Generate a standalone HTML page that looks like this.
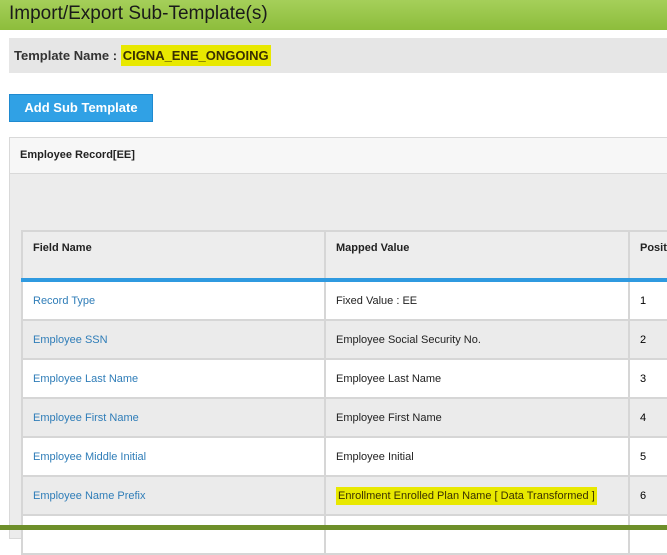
<!DOCTYPE html>
<html><head><style>
body{margin:0;width:667px;height:530px;overflow:hidden;background:#fff;font-family:"Liberation Sans",sans-serif;position:relative}
.hd{position:absolute;left:0;top:0;width:667px;height:30px;background:linear-gradient(#a5cf5a,#8dbd3c);}
.hd span{position:absolute;left:9px;top:3px;font-size:19px;color:#1a1a1a}
.tn{position:absolute;left:9px;top:38px;width:658px;height:35px;background:#e6e6e6}
.tn .t{position:absolute;left:5px;top:10px;font-size:13px;font-weight:bold;color:#333;white-space:nowrap}
.hl{background:#e8e800;padding:3px 2px;color:#3a3000}
.btn{position:absolute;left:9px;top:94px;width:142px;height:26px;background:#30a1e5;border:1px solid #1f8ad0;color:#fff;font-weight:bold;font-size:13px;text-align:center;line-height:26px}
.pn{position:absolute;left:9px;top:137px;width:660px;height:400px;border:1px solid #d9d9d9;background:#ececec}
.ph{height:35px;background:#f7f7f7;border-bottom:1px solid #d9d9d9;font-size:11px;font-weight:bold;color:#222;line-height:35px;padding-left:10px}
table{position:absolute;left:11px;top:92px;border-collapse:collapse;font-size:11px;table-layout:fixed;width:700px}
td,th{border:2px solid #d6d6d6;padding:0 0 0 10px;text-align:left;height:37px;white-space:nowrap;overflow:hidden}
th{height:49px;background:#ededed;color:#222;border-bottom:4px solid #2f9ae0;vertical-align:top;padding-top:10px;box-sizing:border-box}
td.a{color:#2f7db8}
td.b{color:#222}
tr.g td{background:#ebebeb}
tr.w td{background:#fff}
.ft{position:absolute;left:0;top:525px;width:667px;height:5px;background:#6e8f2a}
</style></head><body>
<div class="hd"><span>Import/Export Sub-Template(s)</span></div>
<div class="tn"><span class="t">Template Name : <span class="hl">CIGNA_ENE_ONGOING</span></span></div>
<div class="btn">Add Sub Template</div>
<div class="pn"><div class="ph">Employee Record[EE]</div>
<table>
<colgroup><col style="width:303px"><col style="width:304px"><col style="width:93px"></colgroup>
<tr><th>Field Name</th><th>Mapped Value</th><th>Positi</th></tr>
<tr class="w"><td class="a">Record Type</td><td class="b">Fixed Value : EE</td><td>1</td></tr>
<tr class="g"><td class="a">Employee SSN</td><td class="b">Employee Social Security No.</td><td>2</td></tr>
<tr class="w"><td class="a">Employee Last Name</td><td class="b">Employee Last Name</td><td>3</td></tr>
<tr class="g"><td class="a">Employee First Name</td><td class="b">Employee First Name</td><td>4</td></tr>
<tr class="w"><td class="a">Employee Middle Initial</td><td class="b">Employee Initial</td><td>5</td></tr>
<tr class="g"><td class="a">Employee Name Prefix</td><td class="b"><span class="hl">Enrollment Enrolled Plan Name [ Data Transformed ]</span></td><td>6</td></tr>
<tr class="w"><td class="a"></td><td class="b"></td><td></td></tr>
</table></div>
<div class="ft"></div>
</body></html>
